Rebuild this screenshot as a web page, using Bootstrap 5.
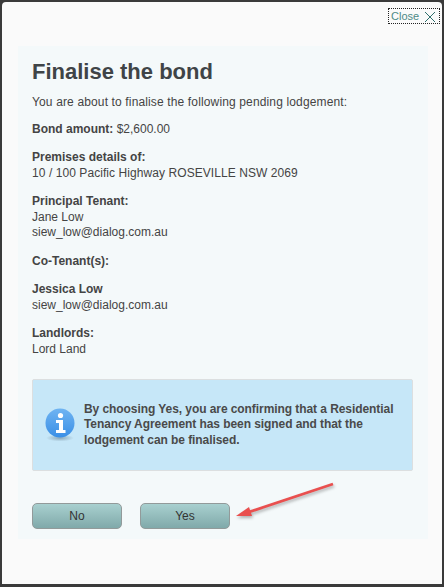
<!DOCTYPE html>
<html lang="en">
<head>
<meta charset="utf-8">
<title>Finalise the bond</title>
<link rel="stylesheet" href="https://cdn.jsdelivr.net/npm/bootstrap@5.3.0/dist/css/bootstrap.min.css">
<style>
html,body{height:100%}
body{background:#3a3a3a;font-family:"Liberation Sans",Arial,sans-serif;font-size:12px;line-height:15.5px;color:#444;overflow:hidden}
.dlg-shell{position:relative;height:582px;width:440px;margin:2px 0 0 2px;background:#fafafa;border-radius:4px 4px 0 0;padding:44px 14px 0 16px}
.dlg-close{position:absolute;top:6px;right:2px;width:52px;height:16px;border:1px dotted #222;color:#4d8a86;font-size:11px;line-height:14px;padding-left:2px;text-decoration:none}
.dlg-close svg{position:absolute;right:3px;top:2px}
.dlg-panel{background:#f4f9fa;height:493px;padding:13px 15px 0 14px}
.dlg-title{font-size:22px;line-height:26px;font-weight:700;color:#3f4447;margin:0 0 10px}
.dlg-panel p{margin:0 0 13px}
.dlg-panel p.dlg-wide{letter-spacing:.14px;margin-bottom:11px}
.dlg-addr{letter-spacing:.07px}
.dlg-info{background:#c6e7f8;border:1px solid #dcdfe0;border-radius:2px;height:92px;margin-top:22px;padding-left:12px;padding-right:10px;gap:9px;font-weight:700;font-size:12px;line-height:15.5px;color:#4a4a4a;letter-spacing:-.07px}
.dlg-btn{width:90px;height:26px;padding:0;font-size:12px;color:#333;border:1px solid #929a9a;border-radius:5px;background:linear-gradient(#a8d0cf,#80a9aa)}
.dlg-btn:hover{color:#333;border-color:#929a9a}
.dlg-actions{margin-top:32px;gap:18px}
.dlg-arrow{position:absolute;left:232px;top:479px;filter:drop-shadow(1px 2px 1.5px rgba(90,90,90,.45))}
</style>
</head>
<body>
<div class="dlg-shell">
  <a href="#" class="dlg-close">Close
    <svg width="12" height="12" viewBox="0 0 12 12"><path d="M1 1l10 10M11 1L1 11" stroke="#2f6f6c" stroke-width="1" fill="none"/></svg>
  </a>
  <div class="dlg-panel">
    <h2 class="dlg-title">Finalise the bond</h2>
    <p class="dlg-wide">You are about to finalise the following pending lodgement:</p>
    <p><b>Bond amount:</b> $2,600.00</p>
    <p><b>Premises details of:</b><br><span class="dlg-addr">10 / 100 Pacific Highway ROSEVILLE NSW 2069</span></p>
    <p><b>Principal Tenant:</b><br>Jane Low<br>siew_low@dialog.com.au</p>
    <p><b>Co-Tenant(s):</b></p>
    <p><b>Jessica Low</b><br>siew_low@dialog.com.au</p>
    <p><b>Landlords:</b><br>Lord Land</p>
    <div class="dlg-info d-flex align-items-center">
      <svg class="flex-shrink-0" width="30" height="34" viewBox="0 0 30 34">
        <defs>
          <linearGradient id="ig" x1="0" y1="0" x2="0" y2="1"><stop offset="0" stop-color="#6fb4f2"/><stop offset="1" stop-color="#3a8fe6"/></linearGradient>
          <radialGradient id="is"><stop offset="0" stop-color="#6d8797" stop-opacity=".65"/><stop offset="1" stop-color="#6d8797" stop-opacity="0"/></radialGradient>
        </defs>
        <ellipse cx="15" cy="30" rx="14" ry="3.5" fill="url(#is)"/>
        <circle cx="15" cy="15" r="14.5" fill="url(#ig)"/>
        <circle cx="15.5" cy="7.5" r="2.6" fill="#fff"/>
        <path d="M11 12h7v10h2.5v3h-9.500v-3H14v-7h-3z" fill="#fff"/>
      </svg>
      <div>By choosing Yes, you are confirming that a Residential Tenancy Agreement has been signed and that the lodgement can be finalised.</div>
    </div>
    <div class="dlg-actions d-flex">
      <button type="button" class="btn dlg-btn">No</button>
      <button type="button" class="btn dlg-btn">Yes</button>
    </div>
  </div>
  <svg class="dlg-arrow" width="104" height="42" viewBox="0 0 104 42">
    <path d="M99 3L12 32" stroke="#e9504f" stroke-width="2.800" fill="none"/>
    <path d="M2 35l13-9 3 9z" fill="#e9504f"/>
  </svg>
</div>
<script src="https://cdn.jsdelivr.net/npm/bootstrap@5.3.0/dist/js/bootstrap.bundle.min.js"></script>
</body>
</html>
